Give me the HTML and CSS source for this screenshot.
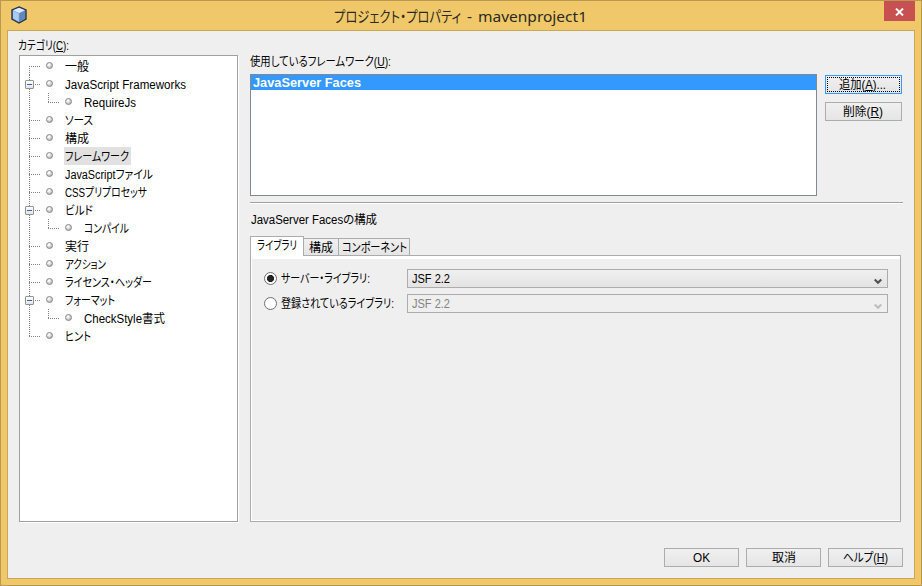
FILE: index.html
```html
<!DOCTYPE html>
<html lang="ja">
<head>
    <meta charset="UTF-8">
    <title>プロジェクト・プロパティ - mavenproject1</title>
    <link rel="stylesheet" href="styles.css">
</head>
<body>
    <div class="window">
        <div class="titlebar">
            <svg class="app-icon" width="16" height="18" viewBox="0 0 16 18">
                <path d="M8 1L15 4V13L8 17L1 13V4Z" fill="#7899c8" stroke="#253452" stroke-width="1.4"/>
                <path d="M8 1.7L14 4.3L8 7L2 4.3Z" fill="#dceaf8"/>
                <path d="M2 4.8L7.8 7.4V15.8L2 12.6Z" fill="#a9cbf1"/>
                <path d="M8.3 7.4L14 4.8V12.6L8.3 15.8Z" fill="#6487ba"/>
            </svg>
            <div class="title"><span data-w="127">プロジェクト・プロパティ</span><span data-w="5">-</span><span data-w="109">mavenproject1</span></div>
            <div class="close">
                <svg width="9" height="8" viewBox="0 0 9 8"><path d="M1 .6L8 7.4M8 .6L1 7.4" stroke="#fff" stroke-width="2"/></svg>
            </div>
        </div>
        <div class="client">
            <div class="main">
                <div class="left">
                    <div class="label category"><span data-w="51">カテゴリ(<u>C</u>):</span></div>
                    <ul class="tree">
                        <li class="first"><i class="dot"></i><b><span data-w="24">一般</span></b></li>
                        <li><i class="expander"></i><i class="dot"></i><b><span data-w="121">JavaScript Frameworks</span></b></li>
                        <li class="child"><i class="dot"></i><b><span data-w="52">RequireJs</span></b></li>
                        <li><i class="dot"></i><b><span data-w="28">ソース</span></b></li>
                        <li><i class="dot"></i><b><span data-w="24">構成</span></b></li>
                        <li><i class="dot"></i><b class="selected"><span data-w="64">フレームワーク</span></b></li>
                        <li><i class="dot"></i><b><span data-w="88">JavaScriptファイル</span></b></li>
                        <li><i class="dot"></i><b><span data-w="82">CSSプリプロセッサ</span></b></li>
                        <li><i class="expander"></i><i class="dot"></i><b><span data-w="28">ビルド</span></b></li>
                        <li class="child"><i class="dot"></i><b><span data-w="45">コンパイル</span></b></li>
                        <li><i class="dot"></i><b><span data-w="24">実行</span></b></li>
                        <li><i class="dot"></i><b><span data-w="41">アクション</span></b></li>
                        <li><i class="dot"></i><b><span data-w="87">ライセンス・ヘッダー</span></b></li>
                        <li><i class="expander"></i><i class="dot"></i><b><span data-w="50">フォーマット</span></b></li>
                        <li class="child"><i class="dot"></i><b><span data-w="81">CheckStyle書式</span></b></li>
                        <li class="last"><i class="dot"></i><b><span data-w="26">ヒント</span></b></li>
                    </ul>
                </div>
                <div class="right">
                    <div class="label used"><span data-w="141">使用しているフレームワーク(<u>U</u>):</span></div>
                    <div class="frameworks">
                        <div class="list">
                            <div class="item"><span data-w="108">JavaServer Faces</span></div>
                        </div>
                        <div class="side">
                            <div class="button focused"><span data-w="47">追加(<u>A</u>)...</span></div>
                            <div class="button"><span data-w="40">削除(<u>R</u>)</span></div>
                        </div>
                    </div>
                    <div class="separator"></div>
                    <div class="label config"><span data-w="126">JavaServer Facesの構成</span></div>
                    <div class="tabs">
                        <div class="tab active"><span data-w="40">ライブラリ</span></div>
                        <div class="tab second"><span data-w="24">構成</span></div>
                        <div class="tab third"><span data-w="65">コンポーネント</span></div>
                    </div>
                    <div class="panel">
                        <div class="row">
                            <i class="radio checked"></i>
                            <div class="option"><span data-w="89">サーバー・ライブラリ:</span></div>
                            <div class="combo"><span data-w="38">JSF 2.2</span>
                                <svg width="8" height="7" viewBox="0 0 8 7"><path d="M.7 1.5L4 4.8L7.3 1.5" fill="none" stroke="#505050" stroke-width="2.2"/></svg>
                            </div>
                        </div>
                        <div class="row">
                            <i class="radio"></i>
                            <div class="option"><span data-w="113">登録されているライブラリ:</span></div>
                            <div class="combo disabled"><span data-w="38">JSF 2.2</span>
                                <svg width="8" height="7" viewBox="0 0 8 7"><path d="M.7 1.5L4 4.8L7.3 1.5" fill="none" stroke="#bdbdbd" stroke-width="2.2"/></svg>
                            </div>
                        </div>
                    </div>
                </div>
            </div>
            <div class="footer">
                <div class="button"><span data-w="17">OK</span></div>
                <div class="button"><span data-w="24">取消</span></div>
                <div class="button"><span data-w="45">ヘルプ(<u>H</u>)</span></div>
            </div>
        </div>
    </div>

    <script src="script.js"></script>
</body>
</html>
```
FILE: styles.css
```css
* {
    box-sizing: border-box;
}
body {
    margin: 0;
    font-family: 'Liberation Sans', 'Noto Sans CJK JP', sans-serif;
    font-size: 12px;
    line-height: 18px;
    color: #000;
    font-feature-settings: "palt";
    cursor: default;
}
span {
    display: inline-block;
    white-space: nowrap;
    transform-origin: 0 50%;
}
u {
    text-underline-offset: 1px;
}
.window {
    width: 922px;
    height: 586px;
    padding: 0 6px 6px;
    border: 1px solid #b9994f;
    background: #f0c869;
}
.titlebar {
    display: flex;
    justify-content: space-between;
    height: 29px;
    margin-right: -6px;
}
.app-icon {
    margin: 5px 0 0 4px;
}
.title {
    display: flex;
    gap: 6px;
    width: 253px;
    margin-left: 9px;
    padding-top: 4px;
    font-family: 'Noto Sans', 'Noto Sans CJK JP', sans-serif;
    font-size: 15px;
    line-height: 22px;
    color: #2b2822;
}
.close {
    display: flex;
    align-items: center;
    justify-content: center;
    width: 31px;
    height: 20px;
    margin-right: 6px;
    padding-top: 1px;
    background: #c75050;
}
.client {
    height: 549px;
    padding: 0 11px;
    border: 1px solid #c9a757;
    background: #efefef;
}

/* Category tree */
.main {
    display: flex;
    gap: 12px;
}
.left {
    width: 219px;
}
.category {
    height: 24px;
    padding-top: 6px;
}
.category span {
    margin-left: -1px;
}
.tree {
    height: 467px;
    margin: 0;
    padding: 1px 0 0 9px;
    list-style: none;
    border: 1px solid #a0a0a0;
    background: #fff;
    box-shadow: 1px 1px 0 #fff;
}
.tree li {
    position: relative;
    display: flex;
    height: 18px;
    padding-left: 17px;
    background:
        repeating-linear-gradient(to bottom, #808080 0 1px, transparent 1px 2px) 0 0 / 1px 18px no-repeat,
        repeating-linear-gradient(to right, #808080 0 1px, transparent 1px 2px) 0 9px / 11px 1px no-repeat;
}
.tree li.first {
    background-position: 0 9px, 0 9px;
}
.tree li.last {
    background-size: 1px 9px, 11px 1px;
}
.tree li.child {
    padding-left: 36px;
    background:
        repeating-linear-gradient(to bottom, #808080 0 1px, transparent 1px 2px) 0 0 / 1px 18px no-repeat,
        repeating-linear-gradient(to bottom, #808080 0 1px, transparent 1px 2px) 19px 0 / 1px 9px no-repeat,
        repeating-linear-gradient(to right, #808080 0 1px, transparent 1px 2px) 19px 9px / 11px 1px no-repeat;
}
.tree b {
    height: 18px;
    padding-left: 1px;
    font-weight: normal;
    line-height: 20px;
}
.tree .selected {
    width: 67px;
    background: #e1e1e1;
}
.dot {
    flex: none;
    width: 7px;
    height: 7px;
    margin: 5px 11px 0 0;
    border: 1px solid #858585;
    border-radius: 50%;
    background: radial-gradient(circle at 35% 30%, #fff 10%, #b4b4b4 80%);
}
.expander {
    position: absolute;
    left: -4px;
    top: 5px;
    width: 9px;
    height: 9px;
    border: 1px solid #929292;
    border-radius: 1px;
    background: linear-gradient(#3b5fa8, #3b5fa8) center / 5px 1px no-repeat, linear-gradient(#fff, #e4e4e4);
}

/* Framework list */
.right {
    width: 653px;
}
.used {
    height: 43px;
    padding-top: 22px;
}
.frameworks {
    display: flex;
    gap: 8px;
}
.list {
    width: 567px;
    height: 122px;
    border: 1px solid #828790;
    background: #fff;
}
.item {
    height: 15px;
    padding-left: 2px;
    background: #3399ff;
    color: #fff;
    font-weight: bold;
    line-height: 16px;
}
.side {
    display: flex;
    flex-direction: column;
    gap: 8px;
    padding-top: 1px;
}
.side .button {
    width: 77px;
    padding-right: 2px;
}
.button {
    display: flex;
    justify-content: center;
    width: 75px;
    height: 19px;
    border: 1px solid #acacac;
    background: linear-gradient(#f0f0f0, #e5e5e5);
    line-height: 18px;
}
.focused {
    border-color: #3399ff;
    outline: 1px dotted #000;
    outline-offset: -3px;
}
.separator {
    height: 2px;
    margin-top: 6px;
    border-top: 1px solid #a0a0a0;
    background: #fff;
}

/* Library tabs */
.config {
    height: 32px;
    padding: 7px 0 0 1px;
}
.tabs {
    display: flex;
    align-items: flex-end;
    height: 19px;
}
.tab {
    display: flex;
    justify-content: center;
    height: 17px;
    border: 1px solid #acacac;
    border-width: 1px 1px 0 0;
    background: linear-gradient(#f0f0f0, #e5e5e5);
    line-height: 19px;
}
.tab.active {
    position: relative;
    width: 54px;
    height: 20px;
    margin-bottom: -1px;
    border-left-width: 1px;
    background: #fff;
    line-height: 18px;
}
.second {
    width: 35px;
}
.third {
    width: 71px;
}
.panel {
    width: 651px;
    height: 267px;
    padding: 10px 12px 0;
    border: 1px solid #acacac;
    box-shadow: inset 0 3px #fff, inset 1px -1px #fff;
}
.row {
    display: flex;
    height: 25px;
}
.row .combo {
    margin-top: 3px;
}
.radio {
    width: 13px;
    height: 13px;
    margin: 6px 4px 0 1px;
    border: 1px solid #707070;
    border-radius: 50%;
    background: #fff;
}
.radio.checked {
    background: radial-gradient(circle, #222 0 3.2px, #fff 3.9px);
}
.option {
    width: 126px;
    padding-top: 4px;
}
.combo {
    display: flex;
    justify-content: space-between;
    width: 481px;
    height: 19px;
    padding: 0 5px 0 4px;
    border: 1px solid #acacac;
    background: linear-gradient(#f0f0f0, #e3e3e3);
    line-height: 18px;
}
.combo svg {
    margin-top: 8px;
}
.disabled {
    color: #838383;
    background: #efefef;
}
.footer {
    display: flex;
    justify-content: flex-end;
    gap: 7px;
    margin: 26px 0 0;
}
```
FILE: script.js
```js
// Squeeze each label to its narrow UI width
document.querySelectorAll('span[data-w]').forEach(label => {
    const target = Number(label.dataset.w);
    const scale = target / label.getBoundingClientRect().width;
    label.style.width = `${target}px`;
    label.style.transform = `scaleX(${scale})`;
});
```
